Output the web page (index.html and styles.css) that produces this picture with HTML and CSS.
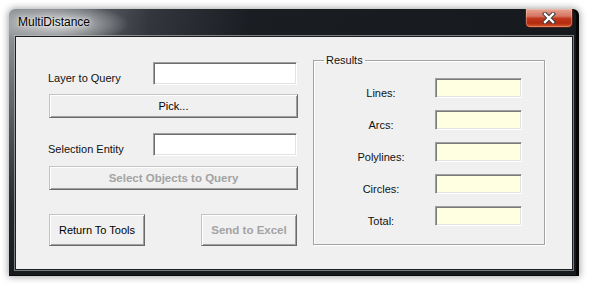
FILE: index.html
```html
<!DOCTYPE html>
<html lang="en">
<head>
  <meta charset="UTF-8">
  <title>MultiDistance</title>
  <link rel="stylesheet" href="styles.css">
</head>
<body>

<div class="window">
  <div class="titlebar">
    <span class="title">MultiDistance</span>
    <button class="close-btn" title="Close">
      <svg width="14" height="12" viewBox="0 0 14 12">
        <path d="M3 2 L11 10 M11 2 L3 10" stroke="#3a3a3a" stroke-width="4.4" stroke-linecap="square"/>
        <path d="M3 2 L11 10 M11 2 L3 10" stroke="#fff" stroke-width="2.4" stroke-linecap="square"/>
      </svg>
    </button>
  </div>

  <div class="client">
    <!-- left side: query inputs -->
    <div class="query-col">
      <div class="field-row">
        <label class="field-label">Layer to Query</label>
        <input class="text-box" type="text">
      </div>
      <button class="btn btn-wide">Pick...</button>

      <div class="field-row second">
        <label class="field-label">Selection Entity</label>
        <input class="text-box" type="text">
      </div>
      <button class="btn btn-wide btn-select" disabled>Select Objects to Query</button>

      <div class="action-row">
        <button class="btn btn-action">Return To Tools</button>
        <button class="btn btn-action" disabled>Send to Excel</button>
      </div>
    </div>

    <!-- right side: results -->
    <fieldset class="results">
      <legend>Results</legend>
      <div class="result-list">
        <div class="result-row"><span class="result-label">Lines:</span><input class="result-box" type="text" readonly></div>
        <div class="result-row"><span class="result-label">Arcs:</span><input class="result-box" type="text" readonly></div>
        <div class="result-row"><span class="result-label">Polylines:</span><input class="result-box" type="text" readonly></div>
        <div class="result-row"><span class="result-label">Circles:</span><input class="result-box" type="text" readonly></div>
        <div class="result-row"><span class="result-label">Total:</span><input class="result-box" type="text" readonly></div>
      </div>
    </fieldset>
  </div>
</div>

</body>
</html>
```

FILE: styles.css
```css
body {
  margin: 0;
  padding: 9px;
  background: #fff;
  font-family: 'Liberation Sans', Arial, sans-serif;
  font-size: 11px;
  color: #111;
}

.window {
  width: 570px;
  height: 267px;
  box-sizing: border-box;
  padding: 0 6px 6px 6px;
  border-radius: 6px 6px 0 0;
  background:
    radial-gradient(ellipse 70px 20px at 50px 15px, rgba(225,225,225,0.9), rgba(225,225,225,0)),
    linear-gradient(rgba(22,25,29,0) 30px, rgba(22,25,29,0.85) 200px, #16191d 100%),
    linear-gradient(100deg, #909397 0, #73777c 50px, #33373d 140px, #1a1d22 240px, #15181c 100%);
  box-shadow: 0 0 7px 1px rgba(0,0,0,0.35), inset -3px 0 0 #050607, inset 0 -1px 0 #0a0b0d;
}

.titlebar {
  height: 27px;
  display: flex;
  align-items: flex-start;
  justify-content: space-between;
}

.title {
  margin-top: 6px;
  margin-left: 3px;
  font-size: 12px;
  line-height: 14px;
  color: #000;
  text-shadow: 0 0 6px rgba(255,255,255,0.95), 0 0 2px rgba(255,255,255,0.7);
}

.close-btn {
  width: 48px;
  height: 19px;
  padding: 0;
  border: 1px solid #4a1e16;
  border-top: none;
  border-radius: 0 0 5px 5px;
  background: linear-gradient(#e6a594 0, #d67561 40%, #c0391f 52%, #b32a10 78%, #d85a2c 100%);
  box-shadow: inset 0 0 0 1px rgba(255,220,200,0.35);
  display: flex;
  align-items: center;
  justify-content: center;
}

.client {
  height: 234px;
  box-sizing: border-box;
  border: 1px solid #1c1f22;
  box-shadow: 0 0 0 1px rgba(190,190,190,0.6);
  background: #f0f0f0;
  display: flex;
  align-items: flex-start;
  padding: 16px 0 0 33px;
}

.query-col {
  width: 249px;
  padding-top: 9px;
  display: flex;
  flex-direction: column;
}

.field-row {
  display: flex;
  justify-content: space-between;
  align-items: flex-end;
  margin-right: 1px;
}

.field-row.second {
  margin-top: 15px;
}

.field-label {
  margin-left: -1px;
  line-height: 14px;
  margin-bottom: 0;
}

.text-box {
  width: 144px;
  height: 23px;
  box-sizing: border-box;
  margin: 0;
  border: 1px solid;
  border-color: #a0a0a0 #fff #fff #a0a0a0;
  box-shadow: inset 1px 1px 0 #6d6d6d, inset -1px -1px 0 #e3e3e3;
  background: #fff;
}

.btn {
  margin: 0;
  padding: 0;
  box-sizing: border-box;
  font-family: 'Liberation Sans', Arial, sans-serif;
  font-size: 11px;
  color: #000;
  background: #f0f0f0;
  border: 1px solid;
  border-color: #c4c4c4 #6a6a6a #6a6a6a #c4c4c4;
  box-shadow: inset 1px 1px 0 #fff, inset -1px -1px 0 #a0a0a0;
}

.btn:disabled {
  color: #a3a3a3;
  font-weight: bold;
  font-size: 11.5px;
}

.btn-wide {
  width: 249px;
  height: 24px;
  margin-top: 9px;
}

.btn-select {
  margin-top: 10px;
}

.action-row {
  display: flex;
  gap: 56px;
  margin-top: 24px;
}

.btn-action {
  width: 96px;
  height: 32px;
}

.results {
  margin: 0 0 0 15px;
  padding: 0;
  width: 232px;
  height: 192px;
  box-sizing: border-box;
  border: 1px solid #a3a3a3;
  box-shadow: 1px 1px 0 #fff, inset 1px 1px 0 #fff;
}

.results legend {
  margin-left: 10px;
  padding: 0 2px;
  line-height: 14px;
}

.result-list {
  padding: 11px 0 0 16px;
  display: flex;
  flex-direction: column;
  gap: 12px;
}

.result-row {
  display: flex;
  align-items: flex-end;
  gap: 3px;
}

.result-label {
  width: 102px;
  text-align: center;
  line-height: 14px;
  margin-bottom: -2px;
}

.result-box {
  width: 87px;
  height: 20px;
  box-sizing: border-box;
  margin: 0;
  border: 1px solid;
  border-color: #a0a0a0 #fff #fff #a0a0a0;
  box-shadow: inset 1px 1px 0 #7a7a7a, inset -1px -1px 0 #e3e3e3;
  background: #ffffe1;
}
```
